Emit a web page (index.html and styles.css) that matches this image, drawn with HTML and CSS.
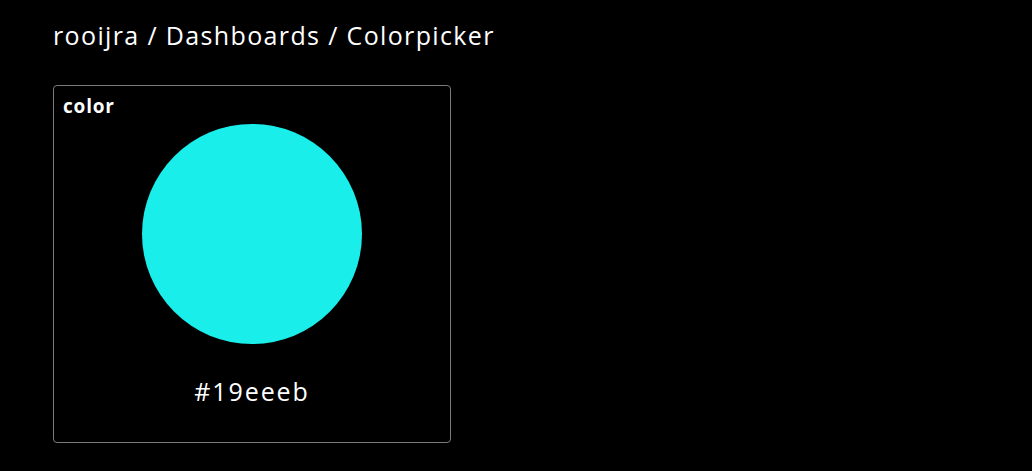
FILE: index.html
```html
<!DOCTYPE html>
<html>
<head>
<meta charset="utf-8">
<link rel="stylesheet" href="styles.css">
</head>
<body>
<div class="page">
  <h1 class="crumbs">rooijra / Dashboards / Colorpicker</h1>
  <div class="card">
    <div class="card-title">color</div>
    <div class="swatch-wrap">
      <div class="swatch"></div>
    </div>
    <div class="hex">#19eeeb</div>
  </div>
</div>
</body>
</html>
```
FILE: styles.css
```css
html, body {
  margin: 0;
  padding: 0;
  background: #000;
  color: #fff;
  font-family: "Open Sans", "Noto Sans", sans-serif;
}
.page {
  padding: 17px 53px;
}
.crumbs {
  margin: 0;
  font-weight: 400;
  font-size: 25px;
  letter-spacing: 1.36px;
  line-height: 36px;
}
.card {
  margin-top: 32px;
  width: 396px;
  height: 356px;
  border: 1px solid #7a7a7a;
  border-radius: 4px;
  display: flex;
  flex-direction: column;
  align-items: stretch;
}
.card-title {
  font-weight: 700;
  font-size: 19px;
  letter-spacing: 0.8px;
  line-height: 24px;
  padding: 8px 0 0 9px;
}
.swatch-wrap {
  display: flex;
  justify-content: center;
  margin-top: 6px;
}
.swatch {
  width: 220px;
  height: 220px;
  border-radius: 50%;
  background: #19eeeb;
}
.hex {
  text-align: center;
  font-size: 25px;
  letter-spacing: 1.9px;
  line-height: 30px;
  margin-top: 32px;
}
```
